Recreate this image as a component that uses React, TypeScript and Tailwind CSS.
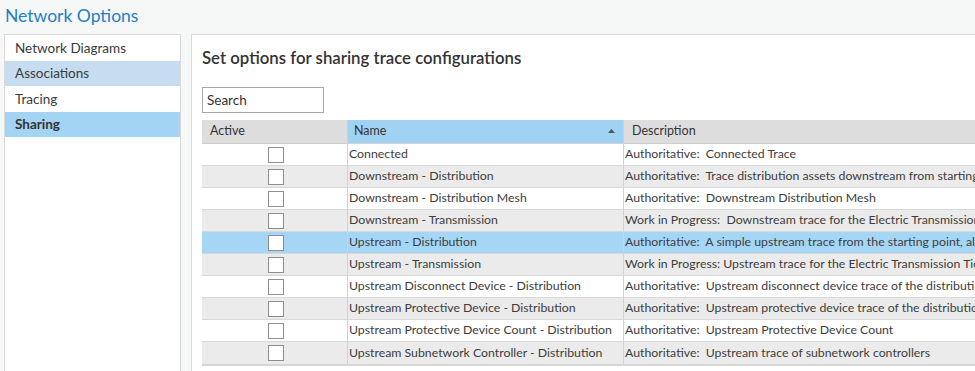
import React from 'react';

const navItems = [
  { label: 'Network Diagrams', state: 'none' },
  { label: 'Associations', state: 'hover' },
  { label: 'Tracing', state: 'none' },
  { label: 'Sharing', state: 'active' },
];

const rows = [
  { name: 'Connected', desc: 'Authoritative:  Connected Trace' },
  { name: 'Downstream - Distribution', desc: 'Authoritative:  Trace distribution assets downstream from starting points' },
  { name: 'Downstream - Distribution Mesh', desc: 'Authoritative:  Downstream Distribution Mesh' },
  { name: 'Downstream - Transmission', desc: 'Work in Progress:  Downstream trace for the Electric Transmission Tier' },
  { name: 'Upstream - Distribution', desc: 'Authoritative:  A simple upstream trace from the starting point, all the way' },
  { name: 'Upstream - Transmission', desc: 'Work in Progress: Upstream trace for the Electric Transmission Tier' },
  { name: 'Upstream Disconnect Device - Distribution', desc: 'Authoritative:  Upstream disconnect device trace of the distribution tier' },
  { name: 'Upstream Protective Device - Distribution', desc: 'Authoritative:  Upstream protective device trace of the distribution tier' },
  { name: 'Upstream Protective Device Count - Distribution', desc: 'Authoritative:  Upstream Protective Device Count' },
  { name: 'Upstream Subnetwork Controller - Distribution', desc: 'Authoritative:  Upstream trace of subnetwork controllers' },
];

const SELECTED = 4;

export default function App() {
  return (
    <div
      className="w-[975px] h-[371px] bg-[#f6f7f7] overflow-hidden flex flex-col text-[#3b3b3b]"
      style={{ fontFamily: 'Lato, "Liberation Sans", sans-serif' }}
    >
      {/* Title */}
      <div className="h-[34px] pl-[5px] pt-[4px] text-[17.5px] leading-[24px] text-[#1f7fc8]">
        Network Options
      </div>

      <div className="flex flex-1 min-h-0">
        {/* Left nav */}
        <div className="ml-[4px] w-[177px] bg-white border border-b-0 border-[#dadada] flex flex-col">
          {navItems.map((item) => (
            <div
              key={item.label}
              className={`h-[25.5px] pl-[10px] flex items-center text-[13.5px] ${
                item.state === 'hover'
                  ? 'bg-[#c6dcf0]'
                  : item.state === 'active'
                  ? 'bg-[#a3d4f3] font-bold text-[#333]'
                  : ''
              }`}
            >
              {item.label}
            </div>
          ))}
        </div>

        {/* Right panel */}
        <div className="ml-[10px] flex-1 min-w-0 bg-white border-l border-t border-[#dadada] pl-[10px] flex flex-col">
          <div className="h-[52px] pt-[12px] text-[16.8px] leading-[22px] font-semibold text-[#333]">
            Set options for sharing trace configurations
          </div>

          <div className="w-[122px] h-[26px] border border-[#a9a9a9] flex items-center pl-[4px] text-[13.5px] text-[#333]">
            Search
          </div>

          <div className="mt-[7px] overflow-hidden border-b-[2px] border-[#d6d6d6]">
            <div className="flex h-[24px] bg-[#dddddd] text-[12.5px] text-[#333] border-b border-[#d0d0d0]">
              <div className="w-[146px] shrink-0 flex items-center pl-[8px] border-r border-[#cfcfcf]">
                Active
              </div>
              <div className="w-[276px] shrink-0 flex items-center pl-[6px] pr-[8px] justify-between bg-[#a0d3f3] border-r border-[#cfcfcf]">
                <span>Name</span>
                <svg width="7" height="4" viewBox="0 0 7 4" className="mb-[2px]">
                  <path d="M0 4 L3.5 0 L7 4 Z" fill="#555" />
                </svg>
              </div>
              <div className="w-[500px] shrink-0 flex items-center pl-[8px]">Description</div>
            </div>

            {rows.map((row, i) => {
              const bg =
                i === SELECTED ? 'bg-[#a6d6f5]' : i % 2 === 1 ? 'bg-[#ebebeb]' : 'bg-white';
              return (
                <div
                  key={row.name}
                  className={`flex h-[22px] text-[12.3px] text-[#3d3d3d] border-b border-[#d8d8d8] last:border-b-0 ${bg}`}
                >
                  <div className="w-[146px] shrink-0 flex items-center justify-center pl-[2px] border-r border-[#d2d2d2]">
                    <div className="w-[16px] h-[16px] bg-white border border-[#8e8e8e]" />
                  </div>
                  <div className="w-[276px] shrink-0 flex items-center pl-[1px] whitespace-nowrap border-r border-[#d2d2d2]">
                    {row.name}
                  </div>
                  <div className="w-[500px] shrink-0 flex items-center pl-[1px] whitespace-pre">
                    {row.desc}
                  </div>
                </div>
              );
            })}
          </div>
        </div>
      </div>
    </div>
  );
}
